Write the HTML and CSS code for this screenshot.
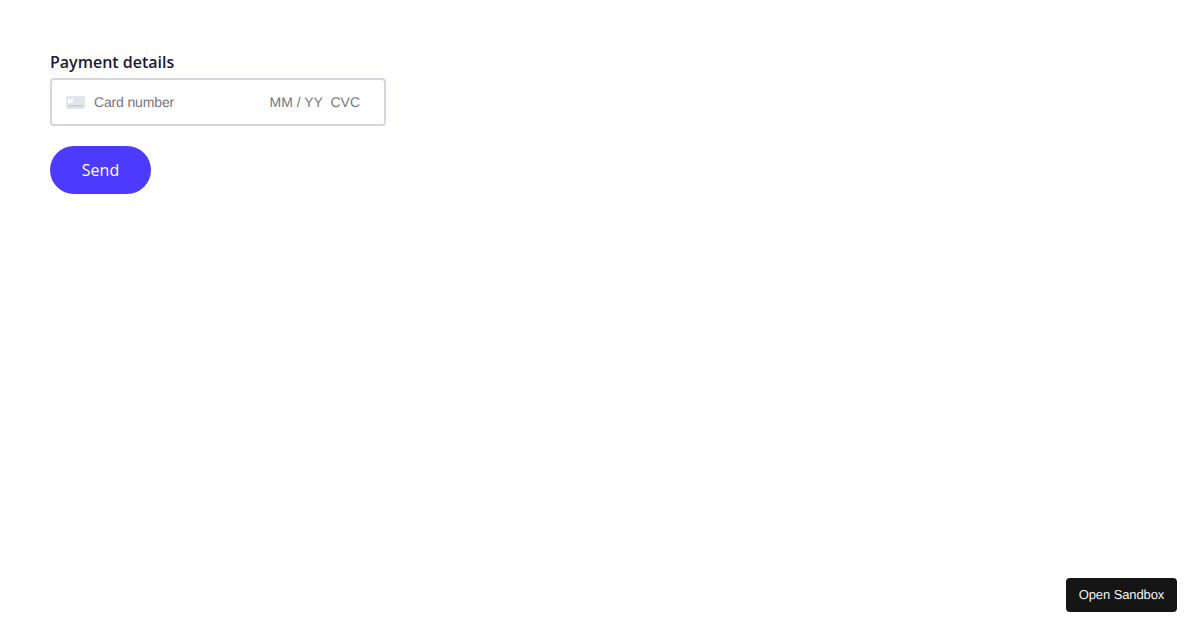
FILE: index.html
```html
<!DOCTYPE html>
<html lang="en">
<head>
  <meta charset="UTF-8">
  <title>Payment details</title>
  <link rel="stylesheet" href="styles.css">
</head>
<body>
  <form class="payment-form">
    <label class="field-label">Payment details</label>
    <div class="card-field">
      <svg class="card-icon" width="19" height="13" viewBox="0 0 19 13">
        <rect x="0" y="0" width="19" height="13" rx="1.5" fill="#e3e5ec"/>
        <rect x="2" y="3" width="5" height="4" fill="#fafafc"/>
        <rect x="2" y="9" width="15" height="1.5" fill="#c9cbd4"/>
      </svg>
      <span class="card-number">Card number</span>
      <span class="card-expiry">MM / YY</span>
      <span class="card-cvc">CVC</span>
    </div>
    <button class="send-btn" type="button">Send</button>
  </form>
  <button class="sandbox-btn" type="button">Open Sandbox</button>
</body>
</html>
```

FILE: styles.css
```css
body, html {
  margin: 0;
  padding: 0;
  background-color: #fff;
}

body {
  height: 630px;
  overflow: hidden;
}

.payment-form {
  display: flex;
  flex-direction: column;
  align-items: flex-start;
  padding: 50px 0 0 50px;
}

.field-label {
  font-family: "Open Sans", sans-serif;
  font-size: 16px;
  font-weight: 600;
  line-height: 24px;
  color: #1a1b35;
  margin-bottom: 4px;
}

.card-field {
  display: flex;
  align-items: center;
  box-sizing: border-box;
  width: 336px;
  height: 48px;
  padding: 0 24px 0 14px;
  border: 2px solid #d5d6e0;
  border-radius: 4px;
  font-family: "Liberation Sans", Arial, sans-serif;
  font-size: 14px;
  text-rendering: geometricPrecision;
  color: #757680;
}

.card-icon {
  margin-right: 9px;
}

.card-number {
  flex-grow: 1;
  letter-spacing: -0.15px;
}

.card-cvc {
  margin-left: 7.5px;
}

.send-btn {
  margin-top: 20px;
  width: 101px;
  height: 48px;
  border: none;
  border-radius: 24px;
  background-color: #4c3bff;
  color: #fff;
  font-family: "Open Sans", sans-serif;
  font-size: 16px;
  cursor: pointer;
}

.sandbox-btn {
  position: fixed;
  right: 23px;
  bottom: 18px;
  width: 111px;
  height: 34px;
  padding: 0 0 2px;
  border: none;
  border-radius: 4px;
  background-color: #151515;
  color: #f4f4f4;
  font-family: "Liberation Sans", Arial, sans-serif;
  font-size: 13px;
  letter-spacing: -0.1px;
  text-rendering: geometricPrecision;
  cursor: pointer;
}
```
